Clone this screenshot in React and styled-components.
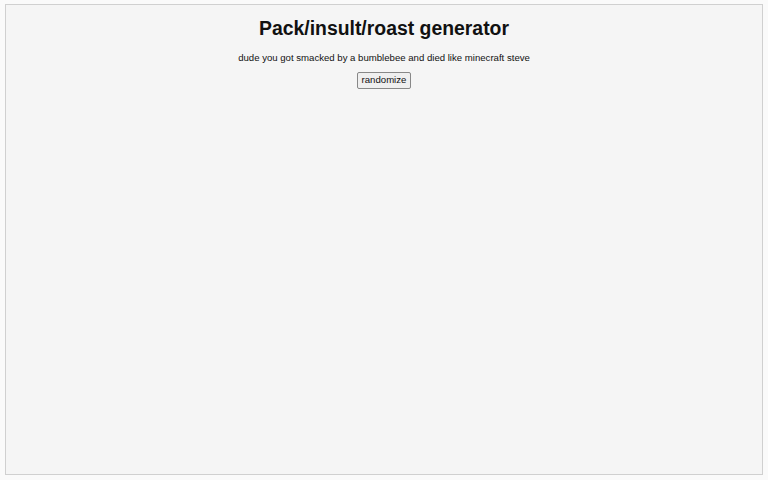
import React, { useState } from 'react';
import styled, { createGlobalStyle } from 'styled-components';

const roasts = [
  'dude you got smacked by a bumblebee and died like minecraft steve',
  'your wifi has more personality than you',
  'you trip over the loading screen',
];

const GlobalStyle = createGlobalStyle`
  html, body {
    margin: 0;
    padding: 0;
    background: #fafafa;
  }
  body {
    font-family: "Liberation Sans", Arial, sans-serif;
  }
`;

const Frame = styled.div`
  box-sizing: border-box;
  margin: 4px 5px 5px 5px;
  height: 471px;
  border: 1px solid #d0d0d0;
  background: #f5f5f5;
  display: flex;
  flex-direction: column;
  align-items: center;
  padding-top: 11px;
`;

const Title = styled.h1`
  margin: 0;
  font-size: 19.4px;
  font-weight: bold;
  color: #111;
  line-height: 24px;
`;

const Roast = styled.p`
  margin: 12px 0 0;
  font-size: 9.6px;
  line-height: 12px;
  color: #111;
`;

const Button = styled.button`
  margin-top: 8px;
  font-family: "Liberation Sans", Arial, sans-serif;
  font-size: 9.6px;
  line-height: 12px;
  padding: 1px 4px 2px;
  color: #111;
  background: #efefef;
  border: 1px solid #888;
  border-radius: 2px;
`;

export default function App() {
  const [idx, setIdx] = useState(0);
  return (
    <>
      <GlobalStyle />
      <Frame>
        <Title>Pack/insult/roast generator</Title>
        <Roast>{roasts[idx]}</Roast>
        <Button onClick={() => setIdx((idx + 1) % roasts.length)}>randomize</Button>
      </Frame>
    </>
  );
}
